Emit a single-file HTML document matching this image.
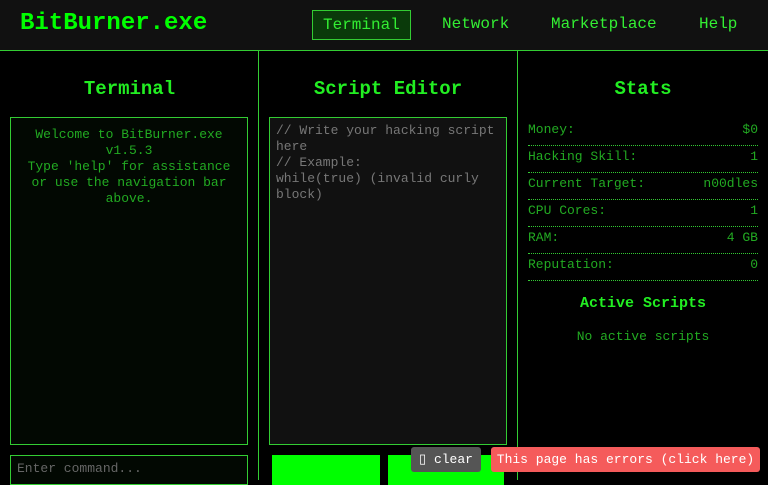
<!DOCTYPE html>
<html><head><style>
*{box-sizing:border-box;margin:0;padding:0}
body{width:768px;height:480px;overflow:hidden;background:#000;font-family:"Liberation Mono",monospace;color:#00cc00;position:relative}
header{height:51px;background:#111;border-bottom:1px solid #33cc33;position:relative}
h1{position:absolute;left:20px;top:10px;font-size:24px;color:#00ff00;font-weight:bold}
nav a{position:absolute;top:10px;height:30px;line-height:28px;font-size:16px;color:#33ee33;padding:0 10px}
nav a.act{border:1px solid #33cc33;background:#0a3a0a}
.col{position:absolute;top:51px;height:429px;width:259px}
.c2{left:258px;border-left:1px solid #33cc33;border-right:1px solid #33cc33;width:260px}
.c3{left:518px;width:250px}
h2{font-size:19px;font-weight:bold;color:#22ee22;text-align:center;position:absolute;top:27px;width:100%}
.out{position:absolute;left:10px;top:66px;width:238px;height:328px;border:1px solid #33cc33;background:#020802;font-size:13px;line-height:16px;text-align:center;padding:9px 6px;color:#22aa22}
.inp{position:absolute;left:10px;top:404px;width:238px;height:30px;border:1px solid #33cc33;background:#020802;font-size:13px;color:#666;padding:5px 6px}
.ed{position:absolute;left:10px;top:66px;width:238px;height:328px;border:1px solid #33cc33;background:#111;font-size:13px;line-height:16px;color:#777;padding:5px 6px}
.btn{position:absolute;top:404px;height:30px;background:#00ff00}
.stats{position:absolute;left:10px;top:68px;width:230px;font-size:13px}
.row{display:flex;justify-content:space-between;height:27px;line-height:22px;border-bottom:1px dotted #33cc33;color:#22aa22}
h3{font-size:15px;color:#22ee22;text-align:center;position:absolute;top:244px;width:100%}
.na{position:absolute;top:278px;width:100%;text-align:center;font-size:13px;color:#22aa22}
.clr{position:absolute;left:411px;top:447px;width:70px;height:25px;background:#555;border-radius:3px;color:#fff;font-family:"Liberation Mono",monospace;font-size:13px;line-height:25px;padding-left:8px}
.err{position:absolute;left:491px;top:447px;width:269px;height:25px;background:#f55b5b;border-radius:3px;color:#fff;font-size:13px;line-height:25px;text-align:center}
</style></head><body>
<header><h1>BitBurner.exe</h1>
<nav><a class="act" style="left:312px">Terminal</a><a style="left:432px">Network</a><a style="left:541px">Marketplace</a><a style="left:689px">Help</a></nav></header>
<div class="col" style="left:0"><h2>Terminal</h2>
<div class="out">Welcome to BitBurner.exe v1.5.3<br>Type 'help' for assistance or use the navigation bar above.</div>
<div class="inp">Enter command...</div></div>
<div class="col c2"><h2>Script Editor</h2>
<div class="ed">// Write your hacking script here<br>// Example:<br>while(true) (invalid curly block)</div>
<div class="btn" style="left:13px;width:108px"></div><div class="btn" style="left:129px;width:116px"></div></div>
<div class="col c3"><h2>Stats</h2>
<div class="stats">
<div class="row"><span>Money:</span><span>$0</span></div>
<div class="row"><span>Hacking Skill:</span><span>1</span></div>
<div class="row"><span>Current Target:</span><span>n00dles</span></div>
<div class="row"><span>CPU Cores:</span><span>1</span></div>
<div class="row"><span>RAM:</span><span>4 GB</span></div>
<div class="row"><span>Reputation:</span><span>0</span></div>
</div>
<h3>Active Scripts</h3><div class="na">No active scripts</div></div>
<div class="clr">▯ clear</div>
<div class="err">This page has errors (click here)</div>
</body></html>
